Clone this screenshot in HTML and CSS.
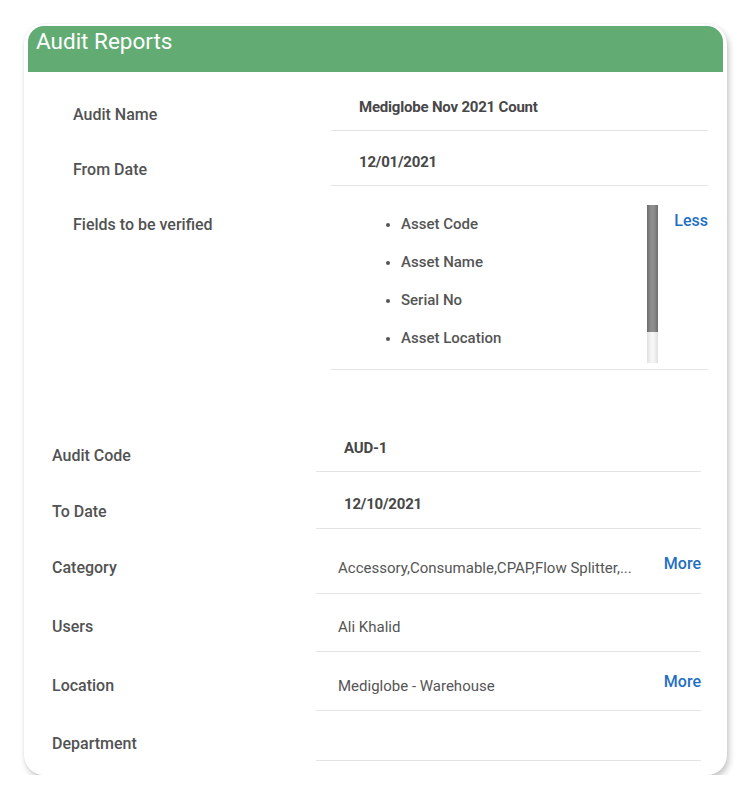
FILE: index.html
```html
<!DOCTYPE html>
<html>
<head>
<meta charset="utf-8">
<link rel="stylesheet" href="styles.css">
</head>
<body>
<div class="card">
  <div class="card-header">Audit Reports</div>
  <div class="section section-top">
    <div class="row r1">
      <div class="label">Audit Name</div>
      <div class="value"><span class="strong">Mediglobe Nov 2021 Count</span></div>
    </div>
    <div class="row r2">
      <div class="label">From Date</div>
      <div class="value"><span class="strong">12/01/2021</span></div>
    </div>
    <div class="row r3">
      <div class="label">Fields to be verified</div>
      <div class="value value-list">
        <div class="scroll-box">
          <ul class="fields">
            <li>Asset Code</li>
            <li>Asset Name</li>
            <li>Serial No</li>
            <li>Asset Location</li>
          </ul>
          <div class="scrollbar"><div class="scroll-thumb"></div></div>
        </div>
        <a class="link link-less">Less</a>
      </div>
    </div>
  </div>
  <div class="section section-bottom">
    <div class="row b1">
      <div class="label">Audit Code</div>
      <div class="value"><span class="strong">AUD-1</span></div>
    </div>
    <div class="row b2">
      <div class="label">To Date</div>
      <div class="value"><span class="strong">12/10/2021</span></div>
    </div>
    <div class="row b3">
      <div class="label">Category</div>
      <div class="value value-more"><span class="plain">Accessory,Consumable,CPAP,Flow Splitter,...</span><a class="link link-more">More</a></div>
    </div>
    <div class="row b4">
      <div class="label">Users</div>
      <div class="value"><span class="plain">Ali Khalid</span></div>
    </div>
    <div class="row b5">
      <div class="label">Location</div>
      <div class="value value-more"><span class="plain">Mediglobe - Warehouse</span><a class="link link-more">More</a></div>
    </div>
    <div class="row b6">
      <div class="label">Department</div>
      <div class="value"></div>
    </div>
  </div>
</div>
</body>
</html>
```
FILE: styles.css
```css
* { box-sizing: border-box; }
html, body { margin: 0; padding: 0; background: #ffffff; }
body {
  font-family: Roboto, "Liberation Sans", Arial, sans-serif;
  padding: 24px 0 0 24px;
}
.card {
  width: 703px;
  height: 751px;
  background: #ffffff;
  border-radius: 20px;
  padding: 2px 4px 0 4px;
  box-shadow: 2px 4px 6px rgba(0,0,0,0.22), 0 0 2px rgba(0,0,0,0.08);
}
.card-header {
  height: 46px;
  background: #62ac73;
  border-radius: 16px 16px 0 0;
  color: #ffffff;
  font-size: 22.5px;
  line-height: 22px;
  padding: 4px 0 0 8px;
}
.row { display: flex; }
.label {
  color: #525252;
  font-size: 16px;
  font-weight: 500;
  line-height: 20px;
}
.value {
  border-bottom: 1px solid #e4e4e4;
  font-size: 15px;
  line-height: 20px;
}
.strong { color: #474747; font-weight: 700; letter-spacing: -0.2px; }
.plain { color: #555555; font-weight: 400; }
.link {
  color: #1f6fc3;
  font-size: 16px;
  font-weight: 500;
  line-height: 20px;
  cursor: pointer;
}

/* top section */
.section-top { padding: 4px 0 0 45px; }
.section-top .label { width: 258px; padding-top: 29px; }
.section-top .value { width: 377px; height: 55px; padding: 21px 0 0 28px; }
.section-top .r3 .value { height: 184px; padding: 19px 0 0 0; }
.value-list { display: flex; align-items: flex-start; }
.scroll-box {
  width: 327px;
  height: 158px;
  display: flex;
}
.fields {
  flex: 1;
  margin: 0;
  padding: 0 0 0 70px;
  list-style: disc;
  color: #555555;
  font-size: 15px;
  font-weight: 500;
}
.fields li { height: 38px; line-height: 38px; }
.fields li::marker { font-size: 14px; color: #555555; }
.scrollbar {
  width: 11px;
  height: 158px;
  background: linear-gradient(to right, #e0e0e0, #f5f5f5 40%, #f5f5f5 60%, #e0e0e0);
}
.scroll-thumb {
  height: 127px;
  background: linear-gradient(to right, #6c6c6c, #8e8e8e 35%, #8e8e8e 65%, #6c6c6c);
}
.link-less { margin-left: auto; margin-top: 6px; }

/* bottom section */
.section-bottom { padding: 45px 0 0 24px; }
.section-bottom .label { width: 264px; }
.section-bottom .value { width: 385px; }
.b1 .label { padding-top: 31px; }
.b1 .value { height: 57px; padding: 23px 0 0 28px; }
.b2 .label { padding-top: 30px; }
.b2 .value { height: 57px; padding: 22px 0 0 28px; }
.b3 .label { padding-top: 29px; }
.b3 .value { height: 65px; padding: 29px 0 0 22px; }
.b4 .label { padding-top: 23px; }
.b4 .value { height: 58px; padding: 23px 0 0 22px; }
.b5 .label { padding-top: 24px; }
.b5 .value { height: 59px; padding: 24px 0 0 22px; }
.b6 .label { padding-top: 23px; }
.b6 .value { height: 50px; }
.value-more { display: flex; align-items: flex-start; }
.link-more { margin-left: auto; margin-top: -4px; }
```
